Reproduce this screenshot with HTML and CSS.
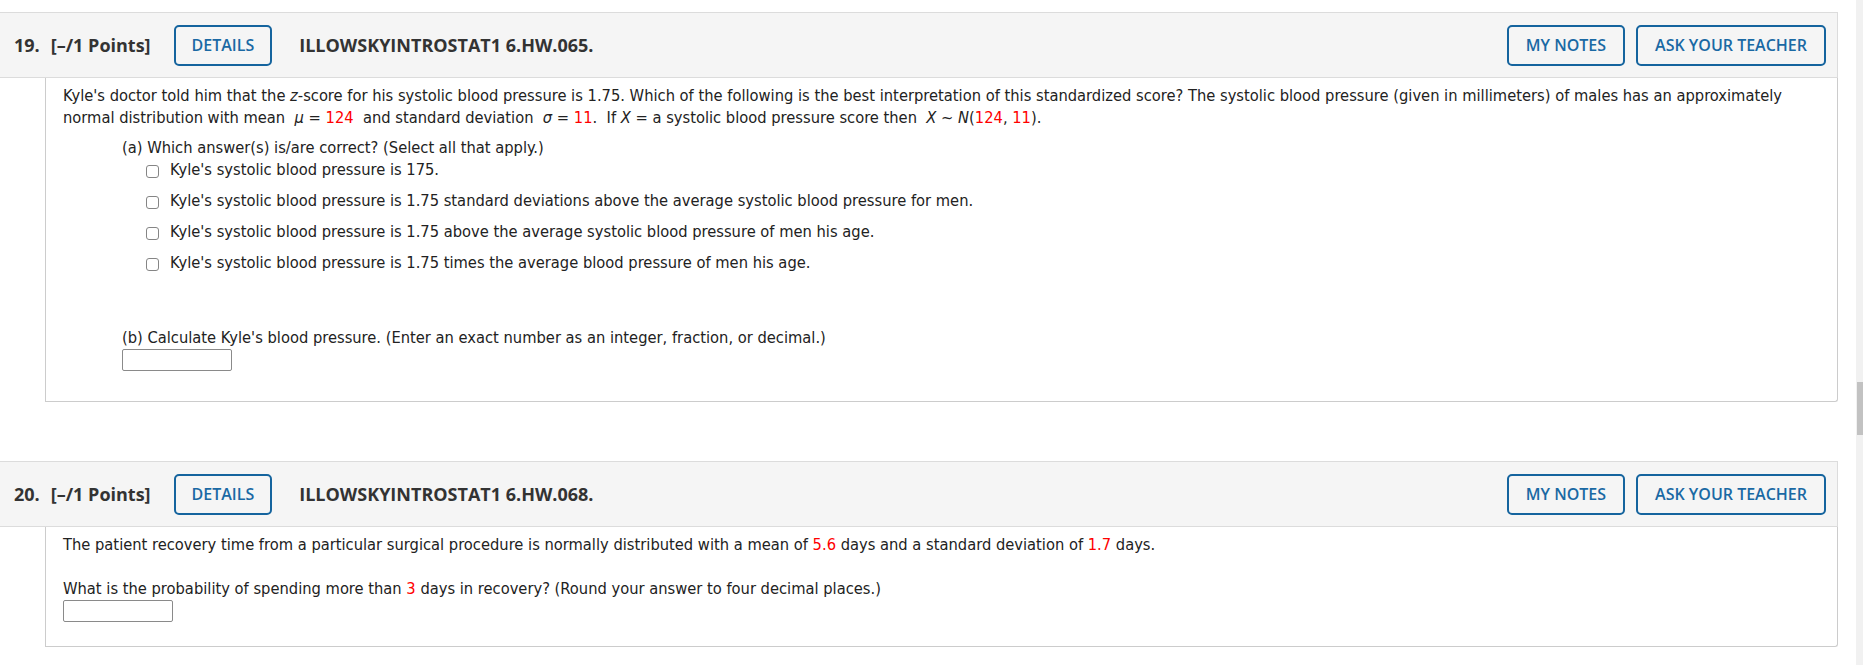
FILE: index.html
```html
<!DOCTYPE html>
<html lang="en">
<head>
<meta charset="utf-8">
<title>Questions</title>
<link rel="stylesheet" href="styles.css">
</head>
<body>
<div class="page">
  <main class="content">
    <section class="question">
      <div class="q-header">
        <span class="q-num">19.</span>
        <span class="q-points">[–/1 Points]</span>
        <button class="btn btn-details">DETAILS</button>
        <span class="q-title">ILLOWSKYINTROSTAT1 6.HW.065.</span>
        <span class="spacer"></span>
        <button class="btn">MY NOTES</button>
        <button class="btn btn-ask">ASK YOUR TEACHER</button>
      </div>
      <div class="q-body">
        <p class="stem">Kyle's doctor told him that the <i>z</i>-score for his systolic blood pressure is 1.75. Which of the following is the best interpretation of this standardized score? The systolic blood pressure (given in millimeters) of males has an approximately normal distribution with mean &nbsp;<i>μ</i> = <span class="red">124</span>&nbsp; and standard deviation &nbsp;<i>σ</i> = <span class="red">11</span>.&nbsp; If <i>X</i> = a systolic blood pressure score then &nbsp;<i>X</i> ~ <i>N</i>(<span class="red">124</span>, <span class="red">11</span>).</p>
        <div class="part part-a">
          <div class="part-label">(a) Which answer(s) is/are correct? (Select all that apply.)</div>
          <ul class="options">
            <li class="option"><span class="cb"></span>Kyle's systolic blood pressure is 175.</li>
            <li class="option"><span class="cb"></span>Kyle's systolic blood pressure is 1.75 standard deviations above the average systolic blood pressure for men.</li>
            <li class="option"><span class="cb"></span>Kyle's systolic blood pressure is 1.75 above the average systolic blood pressure of men his age.</li>
            <li class="option"><span class="cb"></span>Kyle's systolic blood pressure is 1.75 times the average blood pressure of men his age.</li>
          </ul>
        </div>
        <div class="part part-b">
          <div class="part-label">(b) Calculate Kyle's blood pressure. (Enter an exact number as an integer, fraction, or decimal.)</div>
          <span class="answer-box"></span>
        </div>
      </div>
    </section>

    <section class="question">
      <div class="q-header">
        <span class="q-num">20.</span>
        <span class="q-points">[–/1 Points]</span>
        <button class="btn btn-details">DETAILS</button>
        <span class="q-title">ILLOWSKYINTROSTAT1 6.HW.068.</span>
        <span class="spacer"></span>
        <button class="btn">MY NOTES</button>
        <button class="btn btn-ask">ASK YOUR TEACHER</button>
      </div>
      <div class="q-body q-body-short">
        <p class="stem">The patient recovery time from a particular surgical procedure is normally distributed with a mean of <span class="red">5.6</span> days and a standard deviation of <span class="red">1.7</span> days.<br><br>What is the probability of spending more than <span class="red">3</span> days in recovery? (Round your answer to four decimal places.)</p>
        <span class="answer-box"></span>
      </div>
    </section>
  </main>
  <div class="scrollbar"><div class="thumb"></div></div>
</div>
</body>
</html>
```

FILE: styles.css
```css
html, body {
  margin: 0;
  padding: 0;
  background: #ffffff;
}

.page {
  display: flex;
  height: 665px;
  overflow: hidden;
}

.content {
  width: 1856px;
  flex: none;
  padding-top: 12px;
  box-sizing: border-box;
}

.scrollbar {
  width: 7px;
  flex: none;
  background: #f1f1f1;
  padding-top: 382px;
  box-sizing: border-box;
}

.thumb {
  width: 6px;
  margin-left: 1px;
  height: 53px;
  background: #c2c2c2;
}

.question {
  width: 1838px;
}

.question + .question {
  margin-top: 59px;
}

.q-header {
  box-sizing: border-box;
  height: 66px;
  display: flex;
  align-items: center;
  background: #f5f5f5;
  border-top: 1px solid #dcdcdc;
  border-bottom: 1px solid #dcdcdc;
  border-right: 1px solid #dcdcdc;
  padding: 0 11px 0 14px;
  font-family: "Open Sans", "Liberation Sans", sans-serif;
  font-weight: 700;
  font-size: 18px;
  color: #333333;
}

.q-points {
  margin-left: 11px;
}

.btn {
  box-sizing: border-box;
  height: 41px;
  padding: 0 17px;
  border: 2px solid #15649e;
  border-radius: 5px;
  background: transparent;
  color: #1a69a4;
  font-family: "Open Sans", "Liberation Sans", sans-serif;
  font-weight: 600;
  font-size: 16px;
  line-height: 1;
  letter-spacing: 0;
}

.btn-details {
  margin-left: 23px;
  padding: 0 16px;
}

.q-title {
  margin-left: 27px;
}

.spacer {
  flex: 1;
}

.btn-ask {
  margin-left: 11px;
}

.q-body {
  margin-left: 45px;
  border: 1px solid #cccccc;
  border-top: none;
  border-radius: 0 0 3px 0;
  padding: 7px 17px 30px 17px;
  font-family: "DejaVu Sans Condensed", "DejaVu Sans", sans-serif;
  font-size: 16.35px;
  line-height: 22px;
  color: #222222;
}

.q-body-short {
  padding-bottom: 24px;
}

.stem {
  margin: 0;
}

.red {
  color: #ff0000;
}

.part {
  margin-left: 59px;
}

.part-a {
  margin-top: 8px;
}

.options {
  list-style: none;
  margin: 0;
  padding: 0 0 0 24px;
  display: flex;
  flex-direction: column;
  gap: 9px;
}

.option {
  display: flex;
  align-items: center;
}

.cb {
  flex: none;
  width: 11px;
  height: 11px;
  margin: 2px 11px 0 0;
  border: 1px solid #858585;
  border-radius: 3px;
  background: #ffffff;
}

.part-b {
  margin-top: 53px;
}

.answer-box {
  display: block;
  width: 108px;
  height: 20px;
  border: 1px solid #8a8a8a;
  border-radius: 2px;
  background: #ffffff;
}
```
